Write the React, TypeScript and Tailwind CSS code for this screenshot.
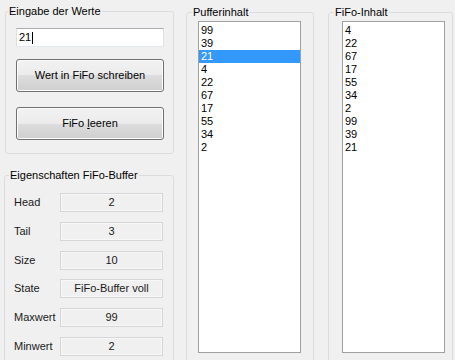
import React from "react";

const font = { fontFamily: '"Liberation Sans", Arial, sans-serif' };

function GroupTitle({ children, ml }: { children: React.ReactNode; ml: string }) {
  return (
    <div className={`-mt-[7px] ${ml} w-fit px-[1px] bg-[#f0f0f0] leading-[13px] text-[11px] text-black`}>
      {children}
    </div>
  );
}

function ListBox({ items, selected }: { items: string[]; selected?: number }) {
  return (
    <div className="w-[103px] h-[332px] border border-[#a0a0a0] bg-white pt-[2px]">
      {items.map((it, i) => (
        <div
          key={i}
          className={`h-[13px] leading-[13px] pl-[2px] text-[11px] ${
            i === selected ? "bg-[#3399ff] text-white" : "text-black"
          }`}
        >
          {it}
        </div>
      ))}
    </div>
  );
}

function Btn({ children, mt }: { children: React.ReactNode; mt: string }) {
  return (
    <div
      className={`${mt} ml-[10px] w-[148px] h-[33px] rounded-[3px] border border-[#707070] flex items-center justify-center text-[11px] text-black bg-[linear-gradient(to_bottom,#f2f2f2_0%,#ebebeb_50%,#dddddd_50%,#cfcfcf_100%)] shadow-[inset_0_0_0_1px_#fcfcfc]`}
    >
      {children}
    </div>
  );
}

function PropRow({ label, value, mt }: { label: string; value: string; mt: string }) {
  return (
    <div className={`${mt} flex items-center h-[19px]`}>
      <div className="w-[55px] shrink-0 pl-[9px] text-[11px] text-[#1a1a1a] whitespace-nowrap">{label}</div>
      <div className="w-[103px] shrink-0 h-[19px] border border-[#d6d6d6] shadow-[inset_0_0_0_1px_#f7f7f7] flex items-center justify-center text-[11px] text-[#1a1a1a]">
        {value}
      </div>
    </div>
  );
}

export default function App() {
  return (
    <div className="w-[455px] h-[360px] overflow-hidden bg-[#f0f0f0] flex items-start" style={font}>
      {/* Column 1 */}
      <div className="ml-[4px] w-[170px] shrink-0 flex flex-col">
        <div className="mt-[11px] ml-[1px] w-[169px] h-[143px] shrink-0 border border-[#dcdcdc] rounded-[3px]">
          <GroupTitle ml="ml-[2px]">Eingabe der Werte</GroupTitle>
          <div className="mt-[10px] ml-[10px] w-[148px] h-[19px] border border-[#abadb3] border-l-[#dbdfe6] border-r-[#dbdfe6] border-b-[#e3e9ef] bg-white flex items-center pl-[2px] text-[11px] text-black">
            <span>21</span>
            <span className="w-[1px] h-[12px] bg-black ml-[1px]" />
          </div>
          <Btn mt="mt-[12px]">Wert in FiFo schreiben</Btn>
          <Btn mt="mt-[15px]">
            <span>
              FiFo <span className="underline">l</span>eeren
            </span>
          </Btn>
        </div>
        <div className="mt-[21px] w-[170px] h-[300px] shrink-0 border border-[#dcdcdc] rounded-[3px]">
          <GroupTitle ml="ml-[4px]">Eigenschaften FiFo-Buffer</GroupTitle>
          <PropRow mt="mt-[11px]" label="Head" value="2" />
          <PropRow mt="mt-[10px]" label="Tail" value="3" />
          <PropRow mt="mt-[10px]" label="Size" value="10" />
          <PropRow mt="mt-[9px]" label="State" value="FiFo-Buffer voll" />
          <PropRow mt="mt-[10px]" label="Maxwert" value="99" />
          <PropRow mt="mt-[10px]" label="Minwert" value="2" />
        </div>
      </div>

      {/* Column 2 */}
      <div className="ml-[12px] mt-[12px] w-[128px] h-[400px] shrink-0 border border-[#dcdcdc] rounded-[3px]">
        <GroupTitle ml="ml-[5px]">Pufferinhalt</GroupTitle>
        <div className="mt-[2px] ml-[11px]">
          <ListBox items={["99", "39", "21", "4", "22", "67", "17", "55", "34", "2"]} selected={2} />
        </div>
      </div>

      {/* Column 3 */}
      <div className="ml-[14px] mt-[12px] w-[125px] h-[400px] shrink-0 border border-[#dcdcdc] rounded-[3px]">
        <GroupTitle ml="ml-[5px]">FiFo-Inhalt</GroupTitle>
        <div className="mt-[2px] ml-[13px]">
          <ListBox items={["4", "22", "67", "17", "55", "34", "2", "99", "39", "21"]} />
        </div>
      </div>
    </div>
  );
}
